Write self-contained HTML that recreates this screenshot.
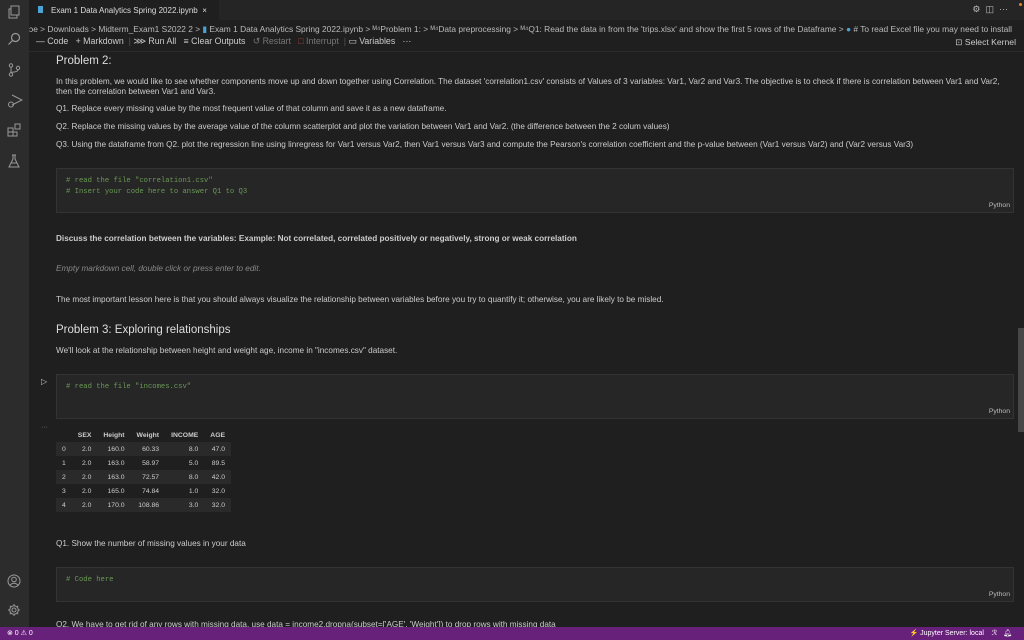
<!DOCTYPE html>
<html><head><meta charset="utf-8"><style>
*{margin:0;padding:0;box-sizing:border-box}
body{width:1024px;height:640px;overflow:hidden;background:#1f1f1f;font-family:"Liberation Sans",sans-serif;color:#ccc;position:relative}
.abs{position:absolute}
#act{left:0;top:0;width:29px;height:627px;background:#2c2c2c}
#tabs{left:29px;top:0;width:995px;height:20px;background:#252525}
#tab{left:29px;top:0;width:190px;height:20px;background:#1f1f1f;font-size:8px;color:#ddd;padding:6px 0 0 22px;white-space:nowrap}
.t{position:absolute;white-space:nowrap}
#bc{left:29px;top:20px;font-size:8.4px;color:#bbb}
#tb{left:36px;top:36px;font-size:8.8px;color:#ccc}
#line{left:29px;top:51px;width:995px;height:1px;background:#2a2a2a}
.md{font-size:8.2px;color:#ccc}
.cell{position:absolute;left:56px;width:958px;background:#262626;border:1px solid #333}
.code{font-family:"Liberation Mono",monospace;font-size:7.2px;color:#6a9955;position:absolute;white-space:pre}
.py{position:absolute;right:14px;font-size:6.8px;color:#bbb}
#sb{left:0;top:627px;width:1024px;height:13px;background:#68217a;font-size:7px;color:#fff}
table{position:absolute;left:56px;top:428px;border-collapse:collapse;font-size:6.8px;color:#ccc}
td,th{padding:0 6px;height:14px;text-align:right}
th{font-weight:bold}
tr.o{background:#2a2a2a}
svg{position:absolute}
</style></head><body>
<div id="act" class="abs"></div>
<svg style="left:7px;top:5px" width="14" height="14" viewBox="0 0 14 14" fill="none" stroke="#999" stroke-width="1"><rect x="4" y="1" width="8" height="9"/><path d="M4 4H2v9h8v-3"/></svg>
<svg style="left:7px;top:32px" width="14" height="14" viewBox="0 0 14 14" fill="none" stroke="#999" stroke-width="1.2"><circle cx="8.5" cy="5.5" r="4"/><path d="M5.5 8.5 1.5 12.5"/></svg>
<svg style="left:7px;top:63px" width="14" height="14" viewBox="0 0 14 14" fill="none" stroke="#999"><circle cx="4" cy="2.5" r="1.7"/><circle cx="4" cy="11.5" r="1.7"/><circle cx="11" cy="5" r="1.7"/><path d="M4 4.2v5.6M11 6.7c0 3-7 2-7 3"/></svg>
<svg style="left:7px;top:94px" width="16" height="14" viewBox="0 0 16 14" fill="none" stroke="#999"><path d="M5 1l10 5-10 5"/><circle cx="4" cy="10.5" r="2.5"/></svg>
<svg style="left:7px;top:123px" width="14" height="14" viewBox="0 0 14 14" fill="none" stroke="#999"><rect x="1" y="5" width="5" height="4"/><rect x="1" y="9" width="5" height="4"/><rect x="6" y="9" width="4" height="4"/><rect x="8" y="1" width="5" height="5"/></svg>
<svg style="left:8px;top:154px" width="12" height="14" viewBox="0 0 12 14" fill="none" stroke="#999"><path d="M4 1h4M5 1v4L1 13h10L7 5V1M3 9h6"/></svg>
<svg style="left:7px;top:574px" width="14" height="14" viewBox="0 0 14 14" fill="none" stroke="#999"><circle cx="7" cy="7" r="6"/><circle cx="7" cy="5.5" r="2.3"/><path d="M3 11.5c2-3 6-3 8 0"/></svg>
<svg style="left:7px;top:603px" width="14" height="14" viewBox="0 0 14 14" fill="none" stroke="#999"><circle cx="7" cy="7" r="2"/><path d="M7 1v2M7 11v2M1 7h2M11 7h2M2.8 2.8l1.4 1.4M9.8 9.8l1.4 1.4M2.8 11.2l1.4-1.4M9.8 4.2l1.4-1.4"/><circle cx="7" cy="7" r="4.3"/></svg>

<div id="tabs" class="abs"></div>
<div id="tab" class="abs"><span style="position:absolute;left:9px;top:6px;width:5px;height:7px;background:#4ba3d6"></span>Exam 1 Data Analytics Spring 2022.ipynb &nbsp;×</div>
<div class="t" style="right:16px;top:4px;font-size:9px;color:#bbb">⚙ &nbsp;◫ &nbsp;···</div>
<div class="t" style="right:2px;top:3px;width:3px;height:3px;border-radius:2px;background:#e08a2c"></div>
<div id="bc" class="t" style="top:24px">ɔe &gt; Downloads &gt; Midterm_Exam1 S2022 2 &gt; <span style="color:#4ba3d6">▮</span> Exam 1 Data Analytics Spring 2022.ipynb &gt; ᴹ⁴Problem 1: &gt; ᴹ⁴Data preprocessing &gt; ᴹ⁴Q1: Read the data in from the 'trips.xlsx' and show the first 5 rows of the Dataframe &gt; <span style="color:#4ba3d6">●</span> # To read Excel file you may need to install</div>
<div id="tb" class="t">— Code &nbsp;&nbsp;+ Markdown &nbsp;<span style="color:#555">|</span> ⋙ Run All &nbsp;&nbsp;≡ Clear Outputs &nbsp;&nbsp;<span style="color:#777">↺ Restart &nbsp;&nbsp;<span style="color:#a44">□</span> Interrupt</span> &nbsp;<span style="color:#555">|</span> ▭ Variables &nbsp;&nbsp;···</div>
<div class="t" style="right:8px;top:37px;font-size:8.6px;color:#ccc">⊡ Select Kernel</div>
<div id="line" class="abs"></div>

<div class="t" style="left:56px;top:55px;font-size:11.5px;color:#ddd">Problem 2:</div>
<div class="t md" style="left:56px;top:77px;line-height:9.5px">In this problem, we would like to see whether components move up and down together using Correlation. The dataset 'correlation1.csv' consists of Values of 3 variables: Var1, Var2 and Var3. The objective is to check if there is correlation between Var1 and Var2,<br>then the correlation between Var1 and Var3.</div>
<div class="t md" style="left:56px;top:104px">Q1. Replace every missing value by the most frequent value of that column and save it as a new dataframe.</div>
<div class="t md" style="left:56px;top:122px">Q2. Replace the missing values by the average value of the column scatterplot and plot the variation between Var1 and Var2. (the difference between the 2 colum values)</div>
<div class="t md" style="left:56px;top:140px">Q3. Using the dataframe from Q2. plot the regression line using linregress for Var1 versus Var2, then Var1 versus Var3 and compute the Pearson's correlation coefficient and the p-value between (Var1 versus Var2) and (Var2 versus Var3)</div>

<div class="cell" style="top:168px;height:45px"><div class="code" style="left:9px;top:7px;line-height:11px"># read the file "correlation1.csv"
# Insert your code here to answer Q1 to Q3</div></div>
<div class="py" style="top:202px">Python</div>

<div class="t md" style="left:56px;top:234px;font-weight:bold">Discuss the correlation between the variables: Example: Not correlated, correlated positively or negatively, strong or weak correlation</div>
<div class="t md" style="left:56px;top:264px;font-style:italic;color:#888">Empty markdown cell, double click or press enter to edit.</div>
<div class="t md" style="left:56px;top:295px">The most important lesson here is that you should always visualize the relationship between variables before you try to quantify it; otherwise, you are likely to be misled.</div>
<div class="t" style="left:56px;top:324px;font-size:11.5px;color:#ddd">Problem 3: Exploring relationships</div>
<div class="t md" style="left:56px;top:346px">We'll look at the relationship between height and weight age, income in "incomes.csv" dataset.</div>

<div class="t" style="left:41px;top:377px;font-size:8px;color:#ccc">▷</div>
<div class="cell" style="top:374px;height:45px"><div class="code" style="left:9px;top:8px"># read the file "incomes.csv"</div></div>
<div class="py" style="top:408px">Python</div>
<div class="t" style="left:41px;top:424px;font-size:7px;color:#888">···</div>
<table>
<tr><th></th><th>SEX</th><th>Height</th><th>Weight</th><th>INCOME</th><th>AGE</th></tr>
<tr class="o"><td>0</td><td>2.0</td><td>160.0</td><td>60.33</td><td>8.0</td><td>47.0</td></tr>
<tr><td>1</td><td>2.0</td><td>163.0</td><td>58.97</td><td>5.0</td><td>89.5</td></tr>
<tr class="o"><td>2</td><td>2.0</td><td>163.0</td><td>72.57</td><td>8.0</td><td>42.0</td></tr>
<tr><td>3</td><td>2.0</td><td>165.0</td><td>74.84</td><td>1.0</td><td>32.0</td></tr>
<tr class="o"><td>4</td><td>2.0</td><td>170.0</td><td>108.86</td><td>3.0</td><td>32.0</td></tr>
</table>

<div class="t md" style="left:56px;top:539px">Q1. Show the number of missing values in your data</div>
<div class="cell" style="top:567px;height:35px"><div class="code" style="left:9px;top:8px"># Code here</div></div>
<div class="py" style="top:591px">Python</div>
<div class="t md" style="left:56px;top:620px">Q2. We have to get rid of any rows with missing data, use data = income2.dropna(subset=['AGE', 'Weight']) to drop rows with missing data</div>
<div class="abs" style="left:1018px;top:328px;width:6px;height:104px;background:#474747"></div>

<div id="sb" class="abs"><span class="t" style="left:7px;top:2px">⊗ 0 ⚠ 0</span><span class="t" style="right:12px;top:2px">⚡ Jupyter Server: local &nbsp;&nbsp;&nbsp;ℛ &nbsp;&nbsp;🔔︎</span></div>
</body></html>
